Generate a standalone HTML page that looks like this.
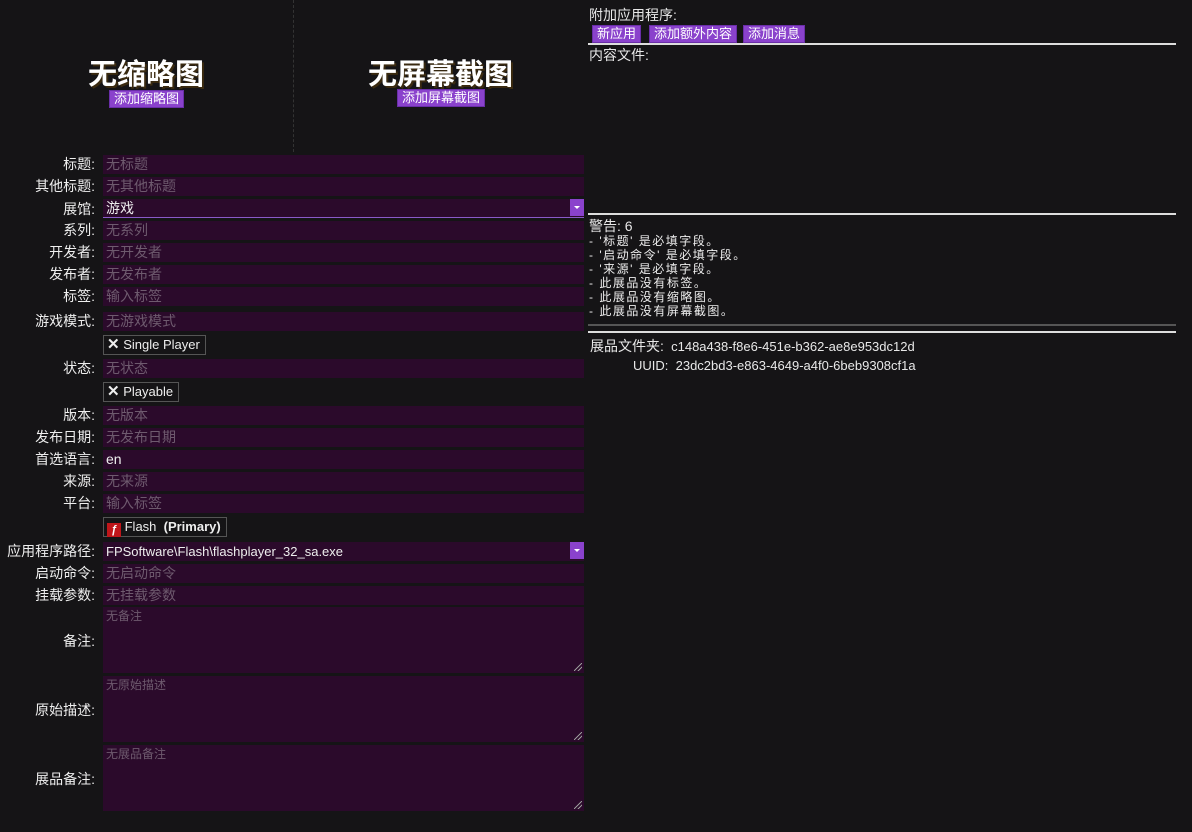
<!DOCTYPE html>
<html><head><meta charset="utf-8"><style>
*{margin:0;padding:0;box-sizing:border-box}
body{width:1192px;height:832px;background:#151416;color:#e8e8e8;font-family:"Liberation Sans","Noto Sans CJK SC",sans-serif;font-size:14px;position:relative;overflow:hidden}
.a{position:absolute}
.lbl{position:absolute;right:1097px;text-align:right;white-space:nowrap;color:#eee;font-size:14px;line-height:18px}
.inp{position:absolute;left:103px;width:481px;height:19px;background:#2b0a2b;color:#6e5a6e;padding-left:3px;font-size:14px;line-height:19px;white-space:nowrap}
.inp.v{color:#eee}
.ta{position:absolute;left:103px;width:481px;background:#2b0a2b;color:#6e5a6e;padding:1px 3px;font-size:12px;line-height:16px}
.grip{position:absolute;right:2px;bottom:2px;width:8px;height:8px;background:linear-gradient(135deg,transparent 45%,#999 45%,#999 55%,transparent 55%,transparent 70%,#999 70%,#999 80%,transparent 80%)}
.chip{position:absolute;left:103px;height:20px;border:1px solid #555;background:#151416;color:#eee;font-size:13px;line-height:18px;padding:0 5px 0 3px;white-space:nowrap}
.btn{position:absolute;background:#8a42cc;color:#fff;font-size:13px;line-height:16px;height:18px;padding:0 4px;border:1px solid #6a2ea8;white-space:nowrap}
.dd{position:absolute;left:570px;width:14px;height:17px;background:#8a42cc}
.dd:after{content:"";position:absolute;left:4px;top:7px;border-left:3px solid transparent;border-right:3px solid transparent;border-top:3px solid #fff}
.big{position:absolute;font-size:29px;font-weight:bold;color:#fff;text-shadow:2px 2px 0 #3a2a10;white-space:nowrap}
.hr{position:absolute;left:588px;width:588px;height:2px;background:#ddd}
.w{position:absolute;left:589px;font-size:12px;line-height:14px;letter-spacing:1.5px;color:#eee;white-space:nowrap}
.x{font-weight:bold;font-size:15px}
</style></head><body>
<div class="a" style="left:293px;top:0;width:0;height:152px;border-left:1px dashed #333"></div>
<div class="big" style="left:88px;top:51px">无缩略图</div>
<div class="btn" style="left:109px;top:90px">添加缩略图</div>
<div class="big" style="left:368px;top:51px">无屏幕截图</div>
<div class="btn" style="left:397px;top:89px">添加屏幕截图</div>

<div class="lbl" style="top:155px">标题:</div><div class="inp" style="top:155px">无标题</div>
<div class="lbl" style="top:177px">其他标题:</div><div class="inp" style="top:177px">无其他标题</div>
<div class="lbl" style="top:200px">展馆:</div><div class="inp v" style="top:199px;border-bottom:1px solid #8a5ac8">游戏</div><div class="dd" style="top:199px"></div>
<div class="lbl" style="top:221px">系列:</div><div class="inp" style="top:221px">无系列</div>
<div class="lbl" style="top:243px">开发者:</div><div class="inp" style="top:243px">无开发者</div>
<div class="lbl" style="top:265px">发布者:</div><div class="inp" style="top:265px">无发布者</div>
<div class="lbl" style="top:287px">标签:</div><div class="inp" style="top:287px">输入标签</div>
<div class="lbl" style="top:312px">游戏模式:</div><div class="inp" style="top:312px">无游戏模式</div>
<div class="chip" style="top:335px"><span class="x">✕</span> Single Player</div>
<div class="lbl" style="top:359px">状态:</div><div class="inp" style="top:359px">无状态</div>
<div class="chip" style="top:382px"><span class="x">✕</span> Playable</div>
<div class="lbl" style="top:406px">版本:</div><div class="inp" style="top:406px">无版本</div>
<div class="lbl" style="top:428px">发布日期:</div><div class="inp" style="top:428px">无发布日期</div>
<div class="lbl" style="top:450px">首选语言:</div><div class="inp v" style="top:450px">en</div>
<div class="lbl" style="top:472px">来源:</div><div class="inp" style="top:472px">无来源</div>
<div class="lbl" style="top:494px">平台:</div><div class="inp" style="top:494px">输入标签</div>
<div class="chip" style="top:517px"><span style="display:inline-block;width:14px;height:14px;background:#c0161a;color:#fff;font-size:11px;line-height:14px;text-align:center;vertical-align:-2px;font-style:italic;font-weight:bold">ƒ</span> Flash &nbsp;<b>(Primary)</b></div>
<div class="lbl" style="top:542px">应用程序路径:</div><div class="inp v" style="top:542px;font-size:13px">FPSoftware\Flash\flashplayer_32_sa.exe</div><div class="dd" style="top:542px"></div>
<div class="lbl" style="top:564px">启动命令:</div><div class="inp" style="top:564px">无启动命令</div>
<div class="lbl" style="top:586px">挂载参数:</div><div class="inp" style="top:586px">无挂载参数</div>
<div class="lbl" style="top:632px">备注:</div><div class="ta" style="top:607px;height:66px">无备注<div class="grip"></div></div>
<div class="lbl" style="top:701px">原始描述:</div><div class="ta" style="top:676px;height:66px">无原始描述<div class="grip"></div></div>
<div class="lbl" style="top:770px">展品备注:</div><div class="ta" style="top:745px;height:66px">无展品备注<div class="grip"></div></div>

<div class="a" style="left:589px;top:7px;line-height:16px">附加应用程序:</div>
<div class="btn" style="left:592px;top:25px">新应用</div>
<div class="btn" style="left:649px;top:25px">添加额外内容</div>
<div class="btn" style="left:743px;top:25px">添加消息</div>
<div class="hr" style="top:43px"></div>
<div class="a" style="left:589px;top:47px;line-height:16px">内容文件:</div>
<div class="hr" style="top:213px"></div>
<div class="a" style="left:589px;top:218px;line-height:16px">警告: 6</div>
<div class="w" style="top:234px">- '标题' 是必填字段。</div>
<div class="w" style="top:248px">- '启动命令' 是必填字段。</div>
<div class="w" style="top:262px">- '来源' 是必填字段。</div>
<div class="w" style="top:276px">- 此展品没有标签。</div>
<div class="w" style="top:290px">- 此展品没有缩略图。</div>
<div class="w" style="top:304px">- 此展品没有屏幕截图。</div>
<div class="hr" style="top:324px;background:#555"></div>
<div class="hr" style="top:331px"></div>
<div class="a" style="left:590px;top:338px;font-size:13px;line-height:16px;white-space:nowrap"><span style="font-size:14px">展品文件夹:</span> &nbsp;c148a438-f8e6-451e-b362-ae8e953dc12d</div>
<div class="a" style="left:633px;top:358px;font-size:13px;line-height:16px;white-space:nowrap">UUID: &nbsp;23dc2bd3-e863-4649-a4f0-6beb9308cf1a</div>
</body></html>
